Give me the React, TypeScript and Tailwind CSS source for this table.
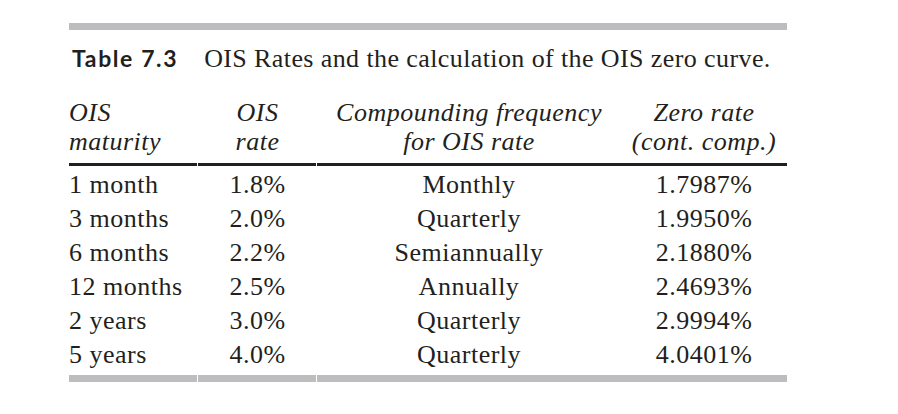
const rows = [
  ["1 month", "1.8%", "Monthly", "1.7987%"],
  ["3 months", "2.0%", "Quarterly", "1.9950%"],
  ["6 months", "2.2%", "Semiannually", "2.1880%"],
  ["12 months", "2.5%", "Annually", "2.4693%"],
  ["2 years", "3.0%", "Quarterly", "2.9994%"],
  ["5 years", "4.0%", "Quarterly", "4.0401%"],
];

const cols = "grid grid-cols-[129px_119px_304px_166px]";

// rule split into cell segments, like the typeset table
function Rule({ className }: { className: string }) {
  return (
    <div className="flex gap-px">
      <div className={`w-[128px] ${className}`} />
      <div className={`w-[118px] ${className}`} />
      <div className={`flex-1 ${className}`} />
    </div>
  );
}

export default function App() {
  return (
    <div className="w-[898px] h-[414px] bg-white text-[#231f20] font-['Liberation_Serif',serif] overflow-hidden">
      <div className="ml-[69px] w-[718px] pt-[23px]">
        <div className="h-[7px] bg-[#bdbdbf]" />

        <div className="mt-[13px] text-[26px] leading-[30px] whitespace-nowrap">
          <span className="font-['Lato',sans-serif] font-bold text-[23px] tracking-[1.6px] ml-[3px] mr-[26px]">
            Table 7.3
          </span>
          <span className="tracking-[0.4px]">
            OIS Rates and the calculation of the OIS zero curve.
          </span>
        </div>

        <div className={`${cols} mt-[24px] italic text-[26px] leading-[29px] tracking-[0.5px]`}>
          <div>
            OIS
            <br />
            maturity
          </div>
          <div className="text-center">
            OIS
            <br />
            rate
          </div>
          <div className="text-center">
            Compounding frequency
            <br />
            for OIS rate
          </div>
          <div className="text-center">
            Zero rate
            <br />
            (cont. comp.)
          </div>
        </div>

        <div className="mt-[7px]">
          <Rule className="h-[3px] bg-[#1f1f1f]" />
        </div>

        <div className="mt-[2px] text-[26px] leading-[34px] tracking-[0.5px]">
          {rows.map((r) => (
            <div key={r[0]} className={cols}>
              <div>{r[0]}</div>
              <div className="text-center">{r[1]}</div>
              <div className="text-center">{r[2]}</div>
              <div className="text-center">{r[3]}</div>
            </div>
          ))}
        </div>

        <div className="mt-[3px]">
          <Rule className="h-[7px] bg-[#bdbdbf]" />
        </div>
      </div>
    </div>
  );
}
